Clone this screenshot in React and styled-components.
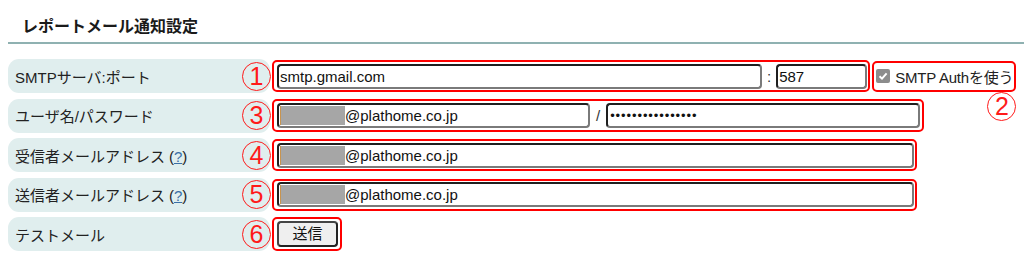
import React from "react";
import styled, { createGlobalStyle } from "styled-components";

const Global = createGlobalStyle`
  html, body { margin: 0; padding: 0; background: #fff; }
  body {
    padding: 8px;
    font-family: "Liberation Sans", "Noto Sans CJK JP", sans-serif;
    color: #222;
  }
`;

const Page = styled.div`
  width: 1016px;
`;

const Title = styled.h2`
  margin: 0;
  height: 36px;
  padding-left: 14px;
  padding-bottom: 1px;
  display: flex;
  align-items: center;
  font-size: 16px;
  font-weight: bold;
  color: #1a1a1a;
  border-bottom: 2px solid #8fb1b1;
  box-sizing: border-box;
  font-family: "Liberation Sans", "Noto Sans CJK JP", sans-serif;
`;

const Rows = styled.div`
  margin-top: 15px;
  display: flex;
  flex-direction: column;
  gap: 5.5px;
`;

const Row = styled.div`
  display: flex;
  align-items: center;
  height: 34px;
`;

const Label = styled.div`
  width: 262px;
  height: 34px;
  flex: none;
  box-sizing: border-box;
  background: #e0eeee;
  border-radius: 11px;
  padding-left: 7px;
  display: flex;
  align-items: center;
  justify-content: space-between;
  font-size: 15px;
  color: #222;
`;

const Help = styled.span`
  margin-left: 4px;
  a {
    color: #3a6ea5;
    text-decoration: underline;
  }
`;

const Num = styled.span`
  width: 29px;
  height: 29px;
  box-sizing: border-box;
  border: 1.8px solid #ff1a1a;
  border-radius: 50%;
  color: #ff1a1a;
  font-family: "Liberation Sans", sans-serif;
  font-size: 25px;
  line-height: 26px;
  text-align: center;
  margin-right: -1px;
  flex: none;
`;

const Mark = styled.div`
  position: relative;
  margin-left: 2px;
  display: flex;
  align-items: center;
  gap: ${(p) => p.$gap || 0}px;
  border: 2px solid #ff0000;
  border-radius: 5px;
  padding: ${(p) => p.$pad || "1px 1px 1px 3px"};
  box-sizing: border-box;
  height: ${(p) => p.$h || 32}px;
`;

const Field = styled.div`
  width: ${(p) => p.$w}px;
  height: 25px;
  box-sizing: border-box;
  border: 2px solid;
  border-color: #1f1f1f #7a7a7a #7a7a7a #1f1f1f;
  border-radius: 4px;
  background: #fff;
  display: flex;
  align-items: center;
  padding: 0 1px;
  font-size: 15px;
  color: #111;
  overflow: hidden;
  white-space: nowrap;
`;

const Masked = styled.span`
  width: 64px;
  align-self: stretch;
  margin: 1px 0;
  background: #a6a6a6;
  border-left: 1px solid #c8944f;
  flex: none;
`;

const Dots = styled.span`
  font-size: 13px;
  letter-spacing: 0.9px;
  padding-left: 1px;
`;

const Sep = styled.span`
  font-size: 15px;
  color: #333;
`;

const Check = styled.span`
  width: 14px;
  height: 14px;
  border-radius: 2px;
  background: #8c8c8c;
  display: inline-flex;
  align-items: center;
  justify-content: center;
  flex: none;
`;

const CheckText = styled.span`
  font-size: 15px;
  letter-spacing: -0.2px;
  color: #222;
  white-space: nowrap;
`;

const Callout = styled(Num)`
  position: absolute;
  right: -1px;
  top: calc(100% + 2px);
`;

const Button = styled.button`
  width: 61px;
  height: 26px;
  box-sizing: border-box;
  background: #efefef;
  border: 2px solid;
  border-color: #444 #222 #222 #444;
  border-radius: 4px;
  font-family: "Liberation Sans", "Noto Sans CJK JP", sans-serif;
  font-size: 15px;
  color: #111;
  padding: 0;
  line-height: 20px;
`;

export default function App() {
  return (
    <Page>
      <Global />
      <Title>レポートメール通知設定</Title>
      <Rows>
        <Row>
          <Label>
            SMTPサーバ:ポート<Num>1</Num>
          </Label>
          <Mark $gap={5} $pad="1px 1px 1px 3px">
            <Field $w={485}>smtp.gmail.com</Field>
            <Sep>:</Sep>
            <Field $w={91}>587</Field>
          </Mark>
          <Mark $gap={5} $pad="0 1px 0 2px" $h={31}>
            <Check>
              <svg width="10" height="10" viewBox="0 0 10 10">
                <path d="M1.5 5.2 L4 7.6 L8.6 2.4" fill="none" stroke="#fff" strokeWidth="2" />
              </svg>
            </Check>
            <CheckText>SMTP Authを使う</CheckText>
            <Callout>2</Callout>
          </Mark>
        </Row>
        <Row>
          <Label>
            ユーザ名/パスワード<Num>3</Num>
          </Label>
          <Mark $gap={6} $pad="1px 2px 1px 3px" $h={33}>
            <Field $w={313}>
              <Masked />@plathome.co.jp
            </Field>
            <Sep>/</Sep>
            <Field $w={314}>
              <Dots>••••••••••••••••</Dots>
            </Field>
          </Mark>
        </Row>
        <Row>
          <Label>
            <span>
              受信者メールアドレス
              <Help>
                (<a href="#">?</a>)
              </Help>
            </span>
            <Num>4</Num>
          </Label>
          <Mark $pad="1px 1px 1px 3px" $h={32}>
            <Field $w={637}>
              <Masked />@plathome.co.jp
            </Field>
          </Mark>
        </Row>
        <Row>
          <Label>
            <span>
              送信者メールアドレス
              <Help>
                (<a href="#">?</a>)
              </Help>
            </span>
            <Num>5</Num>
          </Label>
          <Mark $pad="1px 1px 1px 3px" $h={32}>
            <Field $w={637}>
              <Masked />@plathome.co.jp
            </Field>
          </Mark>
        </Row>
        <Row>
          <Label>
            テストメール<Num>6</Num>
          </Label>
          <Mark $pad="2px 2px 2px 3px" $h={34}>
            <Button>送信</Button>
          </Mark>
        </Row>
      </Rows>
    </Page>
  );
}
